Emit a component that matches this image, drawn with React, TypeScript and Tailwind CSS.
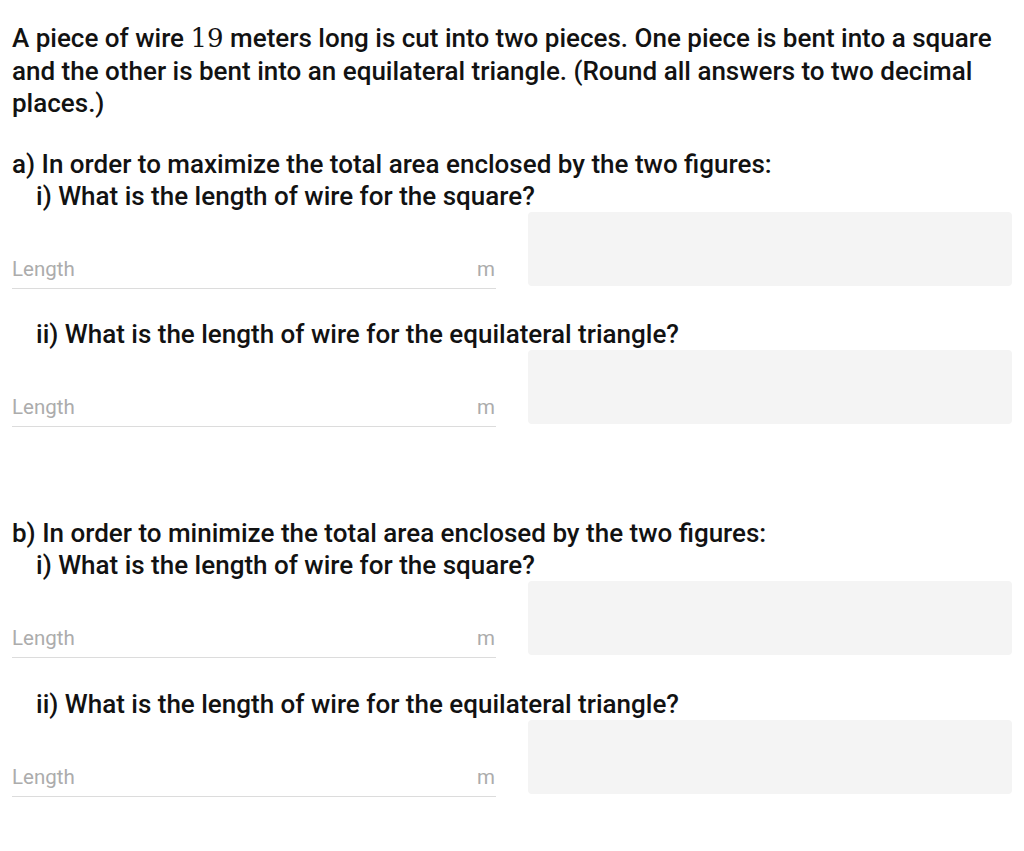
import React from "react";

const font = { fontFamily: "Roboto, 'Noto Sans', sans-serif" };

function AnswerRow() {
  return (
    <div className="flex gap-8">
      <div className="w-[484px] h-[77px] flex items-end border-b border-[#dcdcdc]">
        <div className="flex w-full items-center justify-between pb-[7px] text-[20.5px] leading-[24px] text-[#acacac] font-normal">
          <span>Length</span>
          <span className="pr-[1px]">m</span>
        </div>
      </div>
      <div className="w-[484px] h-[74px] rounded-[4px] bg-[#f4f4f4]" />
    </div>
  );
}

function Question({ text, ml }: { text: string; ml: string }) {
  return <div className={`${ml} text-[26px] leading-[32px] font-medium`}>{text}</div>;
}

export default function App() {
  return (
    <div style={font} className="bg-white min-h-[851px] px-3 pt-[22px] text-[#121212]">
      <p className="text-[26px] leading-[32.5px] font-medium">
        A piece of wire{" "}
        <span className="font-normal" style={{ fontFamily: "'DejaVu Serif', 'Liberation Serif', serif" }}>
          19
        </span>{" "}
        meters long is cut into two pieces. One piece is bent into a square and the other is bent into an equilateral
        triangle. (Round all answers to two decimal places.)
      </p>

      <div className="mt-[28.5px]">
        <Question text="a) In order to maximize the total area enclosed by the two figures:" ml="" />
        <Question text="i) What is the length of wire for the square?" ml="ml-[24px]" />
        <AnswerRow />
        <div className="mt-[28.5px]">
          <Question text="ii) What is the length of wire for the equilateral triangle?" ml="ml-[24px]" />
          <AnswerRow />
        </div>
      </div>

      <div className="mt-[90.5px]">
        <Question text="b) In order to minimize the total area enclosed by the two figures:" ml="" />
        <Question text="i) What is the length of wire for the square?" ml="ml-[24px]" />
        <AnswerRow />
        <div className="mt-[29.5px]">
          <Question text="ii) What is the length of wire for the equilateral triangle?" ml="ml-[24px]" />
          <AnswerRow />
        </div>
      </div>
    </div>
  );
}
